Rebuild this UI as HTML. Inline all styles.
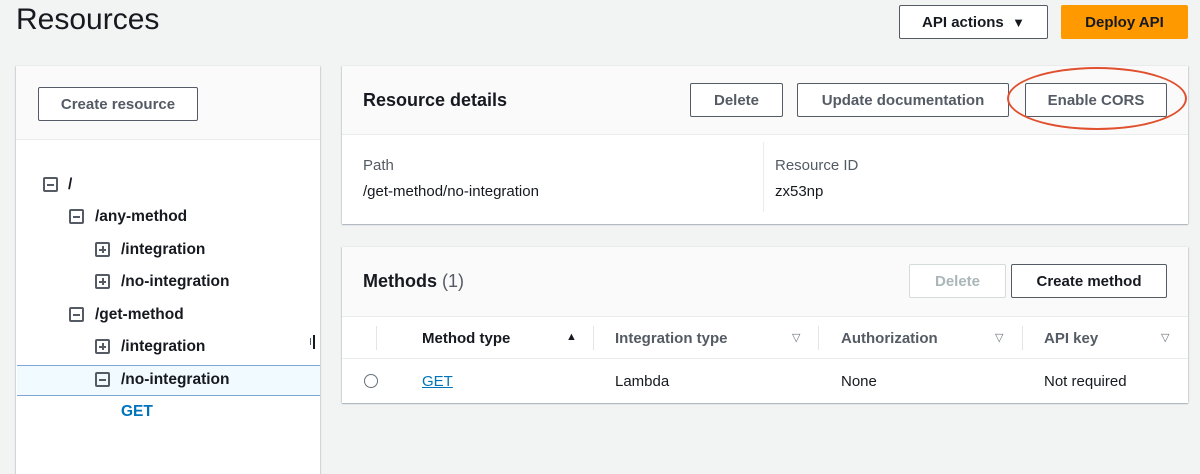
<!DOCTYPE html>
<html style="width:1200px;height:474px;overflow:hidden"><head><style>
*{box-sizing:border-box;margin:0;padding:0}
body{width:1200px;height:474px;background:#f2f3f3;font-family:"Liberation Sans",sans-serif;color:#16191f;position:relative;overflow:hidden;font-size:15px}
.a{position:absolute}
.btn{position:absolute;border:1px solid #545b64;border-radius:2px;background:#fff;font-weight:bold;color:#545b64;font-size:15px;display:flex;align-items:center;justify-content:center}
.panel{position:absolute;background:#fff;box-shadow:0 1px 1px rgba(0,31,63,.3),1px 0 1px rgba(0,31,63,.1),-1px 0 1px rgba(0,31,63,.1)}
.hd{position:absolute;left:0;right:0;top:0;background:#fafafa;border-bottom:1px solid #eaeded}
.t{position:absolute;font-weight:bold;font-size:15.5px;color:#16191f}
.ic{position:absolute;width:15px;height:15px;border:2px solid #545b64;border-radius:2px}
.ic:before{content:"";position:absolute;left:2px;right:2px;top:4.5px;height:2px;background:#545b64}
.ic.p:after{content:"";position:absolute;top:2px;bottom:2px;left:4.5px;width:2px;background:#545b64}
.th{position:absolute;top:330px;font-weight:bold;color:#545b64}
.sep{position:absolute;top:326px;width:1px;height:24px;background:#e3e6e6}
.tri{position:absolute;top:331px;font-size:11px;color:#687078}
</style></head><body>
<div class="a" style="left:16px;top:3px;font-size:30px;color:#16191f">Resources</div>
<div class="btn" style="left:899px;top:5px;width:149px;height:34px;color:#16191f">API actions&nbsp;&nbsp;<span style="font-size:13px">▼</span></div>
<div class="btn" style="left:1061px;top:5px;width:127px;height:34px;background:#ff9900;border-color:#ff9900;color:#16191f">Deploy API</div>

<div class="panel" style="left:16px;top:66px;width:304px;height:420px">
<div class="hd" style="height:74px"></div>
<div class="btn" style="left:22px;top:21px;width:160px;height:34px">Create resource</div>
</div>
<div class="a" style="left:17px;top:365px;width:303px;height:31px;background:#f1faff;border-top:1px solid #7ea6d8;border-bottom:1px solid #7ea6d8"></div>
<div class="ic" style="left:43px;top:177px"></div><div class="t" style="left:68px;top:176px">/</div>
<div class="ic" style="left:69px;top:209px"></div><div class="t" style="left:95px;top:208px">/any-method</div>
<div class="ic p" style="left:95px;top:242px"></div><div class="t" style="left:121px;top:241px">/integration</div>
<div class="ic p" style="left:95px;top:274px"></div><div class="t" style="left:121px;top:273px">/no-integration</div>
<div class="ic" style="left:69px;top:307px"></div><div class="t" style="left:95px;top:306px">/get-method</div>
<div class="ic p" style="left:95px;top:339px"></div><div class="t" style="left:121px;top:338px">/integration</div>
<div class="ic" style="left:95px;top:372px"></div><div class="t" style="left:121px;top:371px">/no-integration</div>
<div class="t" style="left:121px;top:403px;color:#0073bb">GET</div>
<div class="a" style="left:310px;top:338px;width:1px;height:7px;background:#545b64"></div>
<div class="a" style="left:313px;top:335px;width:2px;height:14px;background:#16191f"></div>

<div class="panel" style="left:342px;top:66px;width:846px;height:158px">
<div class="hd" style="height:69px"></div>
<div class="a" style="left:21px;top:24px;font-size:18px;font-weight:bold">Resource details</div>
<div class="btn" style="left:348px;top:17px;width:93px;height:34px">Delete</div>
<div class="btn" style="left:455px;top:17px;width:212px;height:34px">Update documentation</div>
<div class="btn" style="left:683px;top:17px;width:142px;height:34px">Enable CORS</div>
<div class="a" style="left:21px;top:91px;color:#545b64">Path</div>
<div class="a" style="left:21px;top:117px">/get-method/no-integration</div>
<div class="a" style="left:421px;top:76px;width:1px;height:70px;background:#eaeded"></div>
<div class="a" style="left:433px;top:91px;color:#545b64">Resource ID</div>
<div class="a" style="left:433px;top:117px">zx53np</div>
</div>
<div class="a" style="left:1007px;top:67px;width:180px;height:63px;border:2px solid #e0502e;border-radius:50%"></div>

<div class="panel" style="left:342px;top:247px;width:846px;height:156px">
<div class="hd" style="height:70px"></div>
<div class="a" style="left:21px;top:24px;font-size:18px;font-weight:bold">Methods <span style="font-weight:normal;color:#545b64">(1)</span></div>
<div class="btn" style="left:567px;top:17px;width:97px;height:34px;border-color:#d5dbdb;color:#aab7b8">Delete</div>
<div class="btn" style="left:669px;top:17px;width:156px;height:34px;color:#16191f">Create method</div>
<div class="a" style="left:0;top:111px;width:846px;height:1px;background:#eaeded"></div>
</div>
<div class="sep" style="left:376px"></div><div class="sep" style="left:593px"></div><div class="sep" style="left:818px"></div><div class="sep" style="left:1022px"></div>
<div class="th" style="left:422px;color:#16191f">Method type</div><div class="tri" style="left:566px;color:#16191f">▲</div>
<div class="th" style="left:615px">Integration type</div><div class="tri" style="left:792px">▽</div>
<div class="th" style="left:841px">Authorization</div><div class="tri" style="left:995px">▽</div>
<div class="th" style="left:1044px">API key</div><div class="tri" style="left:1161px">▽</div>
<div class="a" style="left:364px;top:374px;width:14px;height:14px;border:1.5px solid #687078;border-radius:50%"></div>
<div class="a" style="left:422px;top:373px;color:#0073bb;text-decoration:underline">GET</div>
<div class="a" style="left:615px;top:373px">Lambda</div>
<div class="a" style="left:841px;top:373px">None</div>
<div class="a" style="left:1044px;top:373px">Not required</div>
</body></html>
